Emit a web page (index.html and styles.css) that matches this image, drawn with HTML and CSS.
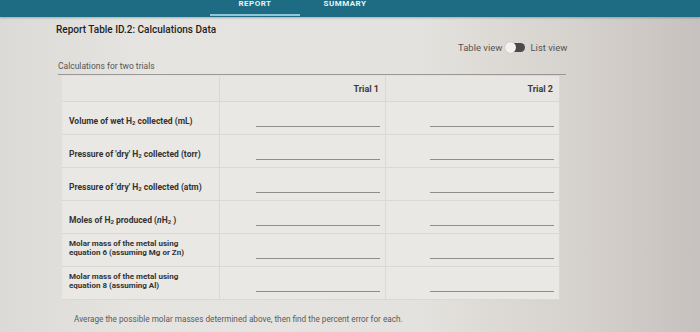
FILE: index.html
```html
<!DOCTYPE html>
<html>
<head>
<meta charset="utf-8">
<link rel="stylesheet" href="styles.css">
</head>
<body>
<header class="topbar">
  <nav class="tabs">
    <span class="tab active">REPORT</span>
    <span class="tab">SUMMARY</span>
  </nav>
</header>
<main class="content">
  <h1 class="title">Report Table ID.2: Calculations Data</h1>
  <div class="viewswitch">
    <span>Table view</span>
    <span class="toggle"><span class="knob"></span><span class="thumb"></span></span>
    <span>List view</span>
  </div>
  <div class="section">
    <div class="caption">Calculations for two trials</div>
    <div class="table">
      <div class="cell head"></div>
      <div class="cell head right">Trial 1</div>
      <div class="cell head right">Trial 2</div>

      <div class="cell label"><span>Volume of wet H<sub>2</sub> collected (mL)</span></div>
      <div class="cell input"><span class="line"></span></div>
      <div class="cell input"><span class="line"></span></div>

      <div class="cell label"><span>Pressure of 'dry' H<sub>2</sub> collected (torr)</span></div>
      <div class="cell input"><span class="line"></span></div>
      <div class="cell input"><span class="line"></span></div>

      <div class="cell label"><span>Pressure of 'dry' H<sub>2</sub> collected (atm)</span></div>
      <div class="cell input"><span class="line"></span></div>
      <div class="cell input"><span class="line"></span></div>

      <div class="cell label"><span>Moles of H<sub>2</sub> produced (<i>n</i>H<sub>2</sub> )</span></div>
      <div class="cell input"><span class="line"></span></div>
      <div class="cell input"><span class="line"></span></div>

      <div class="cell label two"><span>Molar mass of the metal using<br>equation 6 (assuming Mg or Zn)</span></div>
      <div class="cell input"><span class="line"></span></div>
      <div class="cell input"><span class="line"></span></div>

      <div class="cell label two"><span>Molar mass of the metal using<br>equation 8 (assuming Al)</span></div>
      <div class="cell input"><span class="line"></span></div>
      <div class="cell input"><span class="line"></span></div>
    </div>
    <p class="note">Average the possible molar masses determined above, then find the percent error for each.</p>
  </div>
</main>
</body>
</html>
```
FILE: styles.css
```css
* { box-sizing: border-box; }
html, body { margin: 0; padding: 0; }
body {
  width: 700px;
  height: 332px;
  overflow: hidden;
  font-family: Roboto, "Liberation Sans", Arial, sans-serif;
  color: #2e2e2e;
  background: linear-gradient(90deg, #dcdad6 0%, #e6e4e0 20%, #e4e2de 60%, #d6d2ce 82%, #c6c1be 100%);
}
.topbar {
  height: 17px;
  background: #1d6c84;
  box-shadow: 0 1px 2px rgba(0,0,0,0.25);
}
.tabs {
  display: flex;
  padding-left: 210px;
}
.tab {
  color: #e8f2f5;
  font-size: 8px;
  font-weight: 700;
  letter-spacing: 0.5px;
  width: 90px;
  text-align: center;
  line-height: 8px;
  height: 16px;
}
.tab.active {
  border-bottom: 2px solid #8fc7d6;
}
.content {
  padding: 0 0 0 56px;
}
.title {
  margin: 0;
  padding-top: 7px;
  font-size: 10px;
  font-weight: 500;
  color: #1f1f1f;
  height: 22px;
}
.viewswitch {
  display: flex;
  align-items: center;
  gap: 2px;
  margin-left: 402px;
  font-size: 9.5px;
  color: #555;
  height: 16px;
}
.toggle {
  display: inline-flex;
  align-items: center;
  width: 22px;
  height: 11px;
  position: relative;
  margin: 0 1px;
}
.knob {
  width: 11px;
  height: 11px;
  border-radius: 50%;
  background: #f2f1ef;
  box-shadow: 0 0 1px rgba(0,0,0,0.3);
  position: relative;
  z-index: 1;
}
.thumb {
  width: 13px;
  height: 9px;
  border-radius: 0 5px 5px 0;
  background: #4a4a4a;
  margin-left: -4px;
}
.section {
  margin-top: 6px;
  width: 508px;
  margin-left: 2px;
}
.caption {
  font-size: 8.5px;
  color: #555;
  padding-bottom: 3px;
  border-bottom: 1px solid #9a9896;
}
.table {
  display: grid;
  grid-template-columns: 158px 166px 174px;
  grid-template-rows: 26px repeat(6, 33px);
  margin-left: 4px;
  margin-top: 1px;
  width: 498px;
}
.cell {
  background: #eae8e4;
  border: 1px solid #dad8d4;
  border-top: none;
  border-left: none;
  font-size: 8.5px;
  font-weight: 700;
  color: #333;
}
.cell.head {
  background: #e8e6e2;
  display: flex;
  align-items: center;
  padding: 0 6px;
}
.cell.right {
  justify-content: flex-end;
  font-size: 9px;
  color: #3a3a3a;
}
.cell.label {
  display: flex;
  align-items: center;
  padding: 7px 6px 0 7px;
  line-height: 9px;
}
.cell.label.two {
  padding-top: 0;
  padding-bottom: 4px;
  font-size: 8px;
  line-height: 9px;
}
sub {
  font-size: 6px;
  vertical-align: -1px;
}
.cell.input {
  display: flex;
  align-items: flex-end;
  justify-content: flex-end;
  padding: 0 5px 7px 0;
}
.line {
  display: block;
  width: 124px;
  height: 1px;
  background: #8f8d8b;
}
.note {
  margin: 14px 0 0 16px;
  font-size: 8.2px;
  color: #5a5a5a;
}
```
